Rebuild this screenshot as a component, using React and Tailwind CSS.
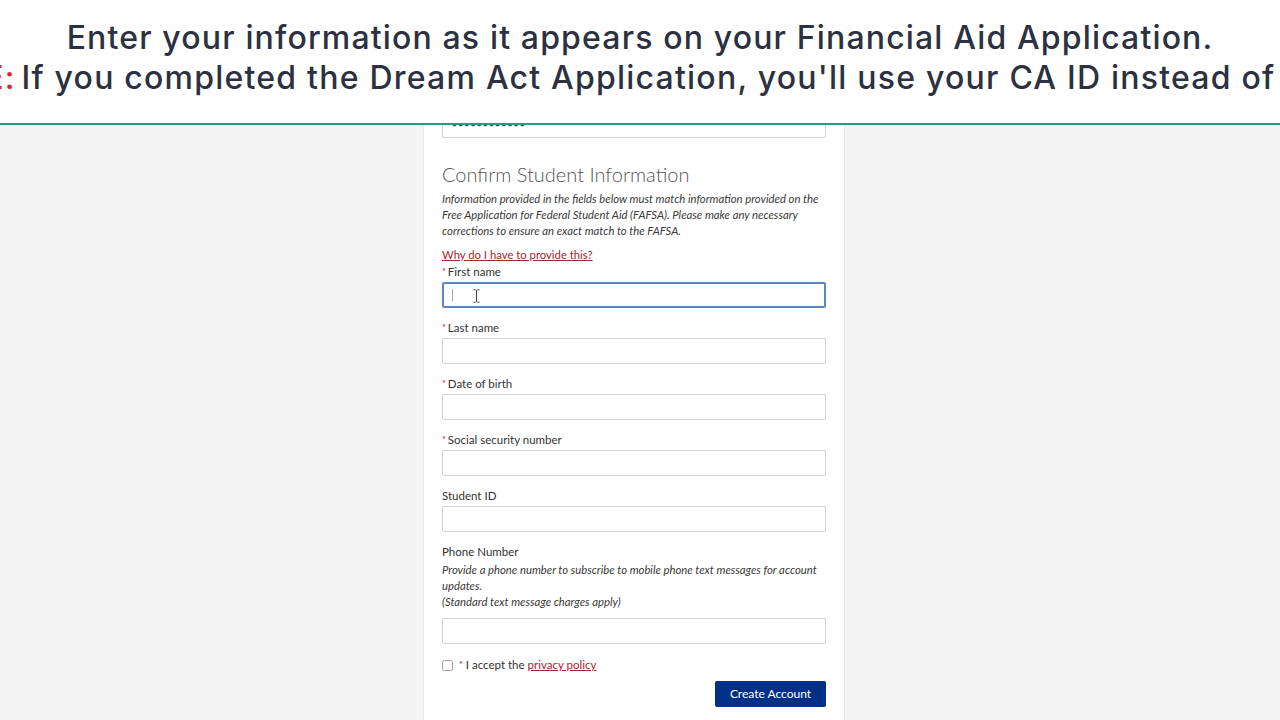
import { useState } from 'react';

const fields = [
  { label: 'Last name', required: true },
  { label: 'Date of birth', required: true },
  { label: 'Social security number', required: true },
  { label: 'Student ID', required: false },
];

function Label({ children, required }) {
  return (
    <label className="block h-4 leading-4 text-[11.5px] text-[#333] mb-[2px]">
      {required && <span className="text-[#d0021b] text-[9px] align-top mr-[2px]">*</span>}
      {children}
    </label>
  );
}

function TextInput() {
  return <input type="text" className="block w-full h-[26px] border border-[#d4d4d4] rounded-[2px] bg-white px-2 text-[12px] outline-none" />;
}

export default function App() {
  const [accepted, setAccepted] = useState(false);

  return (
    <div className="relative w-[1280px] h-[720px] overflow-hidden bg-[#f4f4f4]" style={{ fontFamily: 'Lato, "Open Sans", sans-serif' }}>
      {/* form card */}
      <div className="flex justify-center h-full">
        <div className="w-[422px] h-full mr-[12px] bg-white border-x border-[#ececec] px-[18px] pt-[112px]">
          <div className="h-[26px] border border-[#d4d4d4] rounded-[2px] px-2 pt-[5px] text-[12px] tracking-[-0.8px] text-[#3a4a4a] leading-none">
            ••••••••••••
          </div>

          <h2 className="mt-[24px] h-6 leading-6 text-[20px] font-light text-[#555]">Confirm Student Information</h2>
          <p className="mt-[5px] text-[11.3px] leading-4 italic text-[#3a3a3a]">
            Information provided in the fields below must match information provided on the Free Application for Federal Student Aid (FAFSA). Please make any necessary corrections to ensure an exact match to the FAFSA.
          </p>
          <a href="#" className="block mt-2 h-4 leading-4 text-[11.3px] text-[#a4262c] underline">Why do I have to provide this?</a>

          <div className="mt-[1px]">
            <Label required>First name</Label>
            <div className="relative h-[26px] border-2 border-[#5b86c5] rounded-[2px] flex items-center px-2 mb-3">
              <span className="w-px h-[12px] bg-[#aaa]" />
              <svg className="absolute left-[29px] top-[5px]" width="7" height="14" viewBox="0 0 7 14" fill="none" stroke="#444" strokeWidth="1">
                <path d="M0.5 0.8h2.2M4.3 0.8H6.5M3.5 1v12M0.5 13.2h2.2M4.3 13.2H6.5" />
              </svg>
            </div>
          </div>

          {fields.map(f => (
            <div key={f.label} className="mb-3">
              <Label required={f.required}>{f.label}</Label>
              <TextInput />
            </div>
          ))}

          <div>
            <Label>Phone Number</Label>
            <p className="text-[11.3px] leading-4 italic text-[#3a3a3a] pr-2">
              Provide a phone number to subscribe to mobile phone text messages for account updates.
              <br />
              (Standard text message charges apply)
            </p>
            <div className="mt-2">
              <TextInput />
            </div>
          </div>

          <div className="mt-[13px] h-4 flex items-center text-[11.5px] text-[#333]">
            <input
              type="checkbox"
              checked={accepted}
              onChange={e => setAccepted(e.target.checked)}
              className="w-[11px] h-[11px] m-0 mr-[6px] accent-[#555] opacity-70"
            />
            <span className="text-[#d0021b] text-[9px] mr-[3px]">*</span>
            I accept the&nbsp;<a href="#" className="text-[#a4262c] underline">privacy policy</a>
          </div>

          <div className="flex justify-end mt-2">
            <button className="h-[26px] w-[111px] bg-[#003087] text-white text-[12px] rounded-[2px]">Create Account</button>
          </div>
        </div>
      </div>

      {/* caption overlay */}
      <div className="absolute top-0 left-0 w-full h-[125px] bg-white border-b-2 border-[#2a9a8c] overflow-hidden pt-[18px] text-[#2b3140] text-[32px] leading-10 font-medium" style={{ fontFamily: 'Inter, "Open Sans", sans-serif' }}>
        <p className="text-center whitespace-nowrap tracking-[1.15px]">Enter your information as it appears on your Financial Aid Application.</p>
        <p className="whitespace-nowrap tracking-[1.22px] -ml-[88px]">
          <span className="text-[#e02424] -mr-[4px]">NOTE:</span> If you completed the Dream Act Application, you'll use your CA ID instead of
        </p>
      </div>
    </div>
  );
}
